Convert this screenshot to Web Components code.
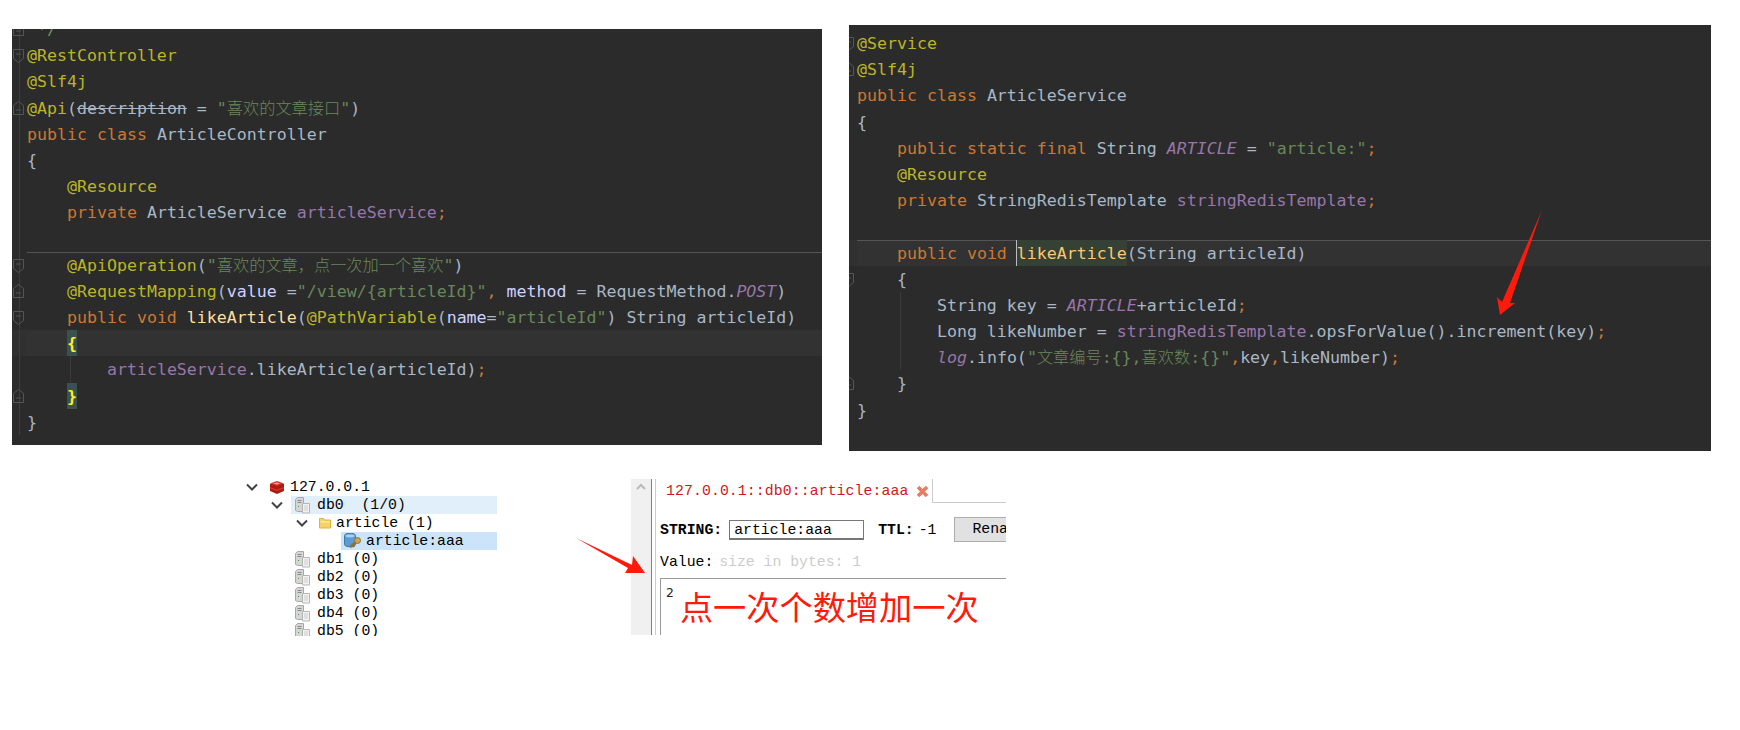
<!DOCTYPE html>
<html>
  <head>
    <meta charset="utf-8">
    <title>Article like counter</title>
    <style>
      html, body { margin: 0; background: #fff; }
      body { width: 1740px; height: 730px; overflow: hidden; padding-top: 25px; box-sizing: border-box; }
      .top { display: flex; align-items: flex-start; }
    </style>
  </head>
  <body>
    <div class="top">
      <code-panel style="--w:810px;--h:416px;--mt:4px;--ml:12px;--pt:0px;--first:-13px;--gut:15px;--rule:#3c3c3c;--fold-x:0px">
        <code-line fold="close"><x-t t="cmt"> */</x-t></code-line>
        <code-line fold="open"><x-t t="an">@RestController</x-t></code-line>
        <code-line><x-t t="an">@Slf4j</x-t></code-line>
        <code-line fold="close"><x-t t="an">@Api</x-t>(<x-t t="del">description</x-t> = <x-t t="str">"<x-t t="zh">喜欢的文章接口</x-t>"</x-t>)</code-line>
        <code-line><x-t t="kw">public class </x-t>ArticleController</code-line>
        <code-line>{</code-line>
        <code-line>    <x-t t="an">@Resource</x-t></code-line>
        <code-line>    <x-t t="kw">private </x-t>ArticleService <x-t t="fld">articleService</x-t><x-t t="kw">;</x-t></code-line>
        <code-line></code-line>
        <code-line divider fold="open">    <x-t t="an">@ApiOperation</x-t>(<x-t t="str">"<x-t t="zh">喜欢的文章，点一次加一个喜欢</x-t>"</x-t>)</code-line>
        <code-line fold="close">    <x-t t="an">@RequestMapping</x-t>(<x-t t="prm">value</x-t> =<x-t t="str">"/view/{articleId}"</x-t><x-t t="kw">, </x-t><x-t t="prm">method</x-t> = RequestMethod.<x-t t="ital">POST</x-t>)</code-line>
        <code-line fold="open">    <x-t t="kw">public void </x-t><x-t t="fn">likeArticle</x-t>(<x-t t="an">@PathVariable</x-t>(<x-t t="prm">name</x-t>=<x-t t="str">"articleId"</x-t>) String articleId)</code-line>
        <code-line current>    <x-t t="brace">{</x-t></code-line>
        <code-line guide="43px">        <x-t t="fld">articleService</x-t>.likeArticle(articleId)<x-t t="kw">;</x-t></code-line>
        <code-line fold="close">    <x-t t="brace">}</x-t></code-line>
        <code-line>}</code-line>
      </code-panel>

      <code-panel style="--w:862px;--h:426px;--mt:0px;--ml:27px;--pt:5px;--first:0px;--gut:8px;--rule:transparent;--fold-x:-7px">
        <code-line fold="open"><x-t t="an">@Service</x-t></code-line>
        <code-line fold="close"><x-t t="an">@Slf4j</x-t></code-line>
        <code-line><x-t t="kw">public class </x-t>ArticleService</code-line>
        <code-line>{</code-line>
        <code-line>    <x-t t="kw">public static final </x-t>String <x-t t="ital">ARTICLE</x-t> = <x-t t="str">"article:"</x-t><x-t t="kw">;</x-t></code-line>
        <code-line>    <x-t t="an">@Resource</x-t></code-line>
        <code-line>    <x-t t="kw">private </x-t>StringRedisTemplate <x-t t="fld">stringRedisTemplate</x-t><x-t t="kw">;</x-t></code-line>
        <code-line></code-line>
        <code-line divider current>    <x-t t="kw">public void </x-t><x-t t="usage">likeArticle</x-t>(String articleId)</code-line>
        <code-line fold="open">    {</code-line>
        <code-line guide="43px">        String key = <x-t t="ital">ARTICLE</x-t>+articleId<x-t t="kw">;</x-t></code-line>
        <code-line guide="43px">        Long likeNumber = <x-t t="fld">stringRedisTemplate</x-t>.opsForValue().increment(key)<x-t t="kw">;</x-t></code-line>
        <code-line guide="43px">        <x-t t="ital">log</x-t>.info(<x-t t="str">"<x-t t="zh">文章编号</x-t>:{},<x-t t="zh">喜欢数</x-t>:{}"</x-t><x-t t="kw">,</x-t>key<x-t t="kw">,</x-t>likeNumber)<x-t t="kw">;</x-t></code-line>
        <code-line fold="close">    }</code-line>
        <code-line>}</code-line>
        <red-arrow style="--x:647px;--y:183px;--aw:50px;--ah:110px" points="46,2 14,95 19,95 4,107 1,89 6,94"></red-arrow>
      </code-panel>
    </div>

    <redis-view>
      <redis-tree>
        <tree-row start="26" open><tree-icon kind="redis" gap="5"></tree-icon>127.0.0.1</tree-row>
        <tree-row start="51" open hl="#e1effb"><tree-icon kind="db"></tree-icon>db0  (1/0)</tree-row>
        <tree-row start="76" open><tree-icon kind="folder"></tree-icon>article (1)</tree-row>
        <tree-row start="101" hl="#cce4fa"><tree-icon kind="key"></tree-icon>article:aaa</tree-row>
        <tree-row start="51"><tree-icon kind="db"></tree-icon>db1 (0)</tree-row>
        <tree-row start="51"><tree-icon kind="db"></tree-icon>db2 (0)</tree-row>
        <tree-row start="51"><tree-icon kind="db"></tree-icon>db3 (0)</tree-row>
        <tree-row start="51"><tree-icon kind="db"></tree-icon>db4 (0)</tree-row>
        <tree-row start="51"><tree-icon kind="db"></tree-icon>db5 (0)</tree-row>
      </redis-tree>
      <key-detail></key-detail>
      <red-arrow style="--x:575px;--y:60px;--aw:74px;--ah:40px" points="1,0 57,27 58,18 70,35 50,35 53,30"></red-arrow>
    </redis-view>

    <script>
      // one syntax-coloured run of text
      class XToken extends HTMLElement {
        constructor() {
          super();
          this.attachShadow({mode: 'open'}).innerHTML = `<style>
            :host { display: inline; }
            :host([t=kw]) { color: #cc7832; }
            :host([t=an]) { color: #bbb529; }
            :host([t=str]) { color: #6a8759; }
            :host([t=cmt]) { color: #629755; }
            :host([t=fld]) { color: #9876aa; }
            :host([t=ital]) { color: #9876aa; font-style: italic; }
            :host([t=prm]) { color: #d0d0ff; }
            :host([t=fn]) { color: #ffdf9f; }
            :host([t=del]) { color: #a9b7c6; text-decoration: line-through; }
            :host([t=zh]) { font-family: "Noto Sans CJK SC", monospace; font-size: 16.2px; font-weight: 300; line-height: 1px; }
            :host([t=brace]) { color: #ffef28; font-weight: bold; background: #3b514d; display: inline-block; height: 26.2px; vertical-align: top; }
            :host([t=usage]) { color: #ffc66d; background: #344134; display: inline-block; height: 26.2px; vertical-align: top; border-left: 1px solid #bbb; margin-left: -1px; }
          </style><slot></slot>`;
        }
      }
      customElements.define("x-t", XToken);

      class CodePanel extends HTMLElement {
        constructor() {
          super();
          this.attachShadow({mode: 'open'}).innerHTML = `<style>
            :host {
              display: block; flex: none; position: relative; overflow: hidden; box-sizing: border-box;
              width: var(--w); height: var(--h);
              margin: var(--mt) 0 0 var(--ml); padding-top: var(--pt);
              background: #2b2b2b; color: #a9b7c6;
              font: 16.6px/28.2px "DejaVu Sans Mono", "Noto Sans CJK SC", monospace;
            }
            .inner { margin-top: var(--first); }
          </style><div class="inner"><slot></slot></div>`;
        }
      }
      customElements.define("code-panel", CodePanel);

      class CodeLine extends HTMLElement {
        static get observedAttributes() { return ["fold"]; }

        constructor() {
          super();
          this.attachShadow({mode: 'open'}).innerHTML = `<style>
            :host { display: flex; height: 26.2px; white-space: pre; }
            .gutter {
              flex: none; width: var(--gut); position: relative;
              background: linear-gradient(var(--rule), var(--rule)) 7px 0 / 1px 100% no-repeat;
            }
            .gutter svg { position: absolute; left: var(--fold-x); top: 6px; }
            .code { flex: 1; min-width: 0; }
            :host([divider]) .code { box-shadow: inset 0 1px 0 #555; }
            :host([current]) .code { background: #323232; }
            :host([current]) .gutter { background-color: #303030; }
            :host([guide]) .code {
              background: linear-gradient(#3b3b3b, #3b3b3b) var(--guide-x, 0) 0 / 1px 100% no-repeat;
            }
          </style><div class="gutter"></div><div class="code"><slot></slot></div>`;
        }

        connectedCallback() {
          if (this.hasAttribute("guide")) this.style.setProperty("--guide-x", this.getAttribute("guide"));
          this._updateRendering();
        }

        attributeChangedCallback() {
          this._updateRendering();
        }

        _updateRendering() {
          var fold = this.getAttribute("fold");
          var box = this.shadowRoot.querySelector(".gutter");
          if (fold == "open") {
            box.innerHTML = '<svg width="13" height="15" fill="none" stroke="#555"><path d="M1.5 1.5h10v9l-5 4-5-4zM4 6h5"/></svg>';
          } else if (fold == "close") {
            box.innerHTML = '<svg width="13" height="15" fill="none" stroke="#555"><path d="M1.5 13.5h10v-9l-5-4-5 4zM4 9h5"/></svg>';
          } else {
            box.innerHTML = "";
          }
        }
      }
      customElements.define("code-line", CodeLine);

      // hand drawn red annotation arrow, sits over the other content
      class RedArrow extends HTMLElement {
        constructor() {
          super();
          this.attachShadow({mode: 'open'}).innerHTML = `<style>
            :host { position: absolute; left: var(--x); top: var(--y); width: var(--aw); height: var(--ah); display: block; }
            svg { display: block; width: 100%; height: 100%; }
          </style><svg fill="#ff1a0c"><polygon points="${this.getAttribute("points")}"/></svg>`;
        }
      }
      customElements.define("red-arrow", RedArrow);

      class RedisView extends HTMLElement {
        constructor() {
          super();
          this.attachShadow({mode: 'open'}).innerHTML = `<style>
            :host {
              display: flex; position: relative; height: 158px; margin-top: 27px; padding-left: 240px;
              overflow: hidden; color: #000;
              font: 14.8px/18px "Liberation Mono", "Noto Sans CJK SC", monospace;
            }
          </style><slot></slot>`;
        }
      }
      customElements.define("redis-view", RedisView);

      class RedisTree extends HTMLElement {
        constructor() {
          super();
          this.attachShadow({mode: 'open'}).innerHTML = `<style>
            :host { display: block; flex: none; width: 257px; }
          </style><slot></slot>`;
        }
      }
      customElements.define("redis-tree", RedisTree);

      class TreeRow extends HTMLElement {
        constructor() {
          super();
          this.attachShadow({mode: 'open'}).innerHTML = `<style>
            :host { display: flex; height: 18px; white-space: pre; }
            .lead { flex: none; display: flex; justify-content: flex-end; align-items: center; }
            .lead svg { margin-right: 8px; }
            .body { flex: 1; display: flex; align-items: center; padding-left: 3px; }
          </style><div class="lead"></div><div class="body"><slot></slot></div>`;
        }

        connectedCallback() {
          var lead = this.shadowRoot.querySelector(".lead");
          lead.style.width = this.getAttribute("start") + "px";
          if (this.hasAttribute("open")) {
            lead.innerHTML = '<svg width="12" height="8" fill="none" stroke="#444" stroke-width="2"><path d="M1 1.5l5 5 5-5"/></svg>';
          }
          if (this.hasAttribute("hl")) {
            this.shadowRoot.querySelector(".body").style.background = this.getAttribute("hl");
          }
        }
      }
      customElements.define("tree-row", TreeRow);

      var TREE_ICONS = {
        redis: [16, 3, '<svg width="16" height="13" viewBox="0 0 16 13"><path fill="#a41e11" d="M1 3v7l7 3 7-3V3z"/><path fill="#dc3024" d="M8 0l7 2.6L8 5 1 2.6z"/><path fill="#dc3024" d="M1 6l7 2.6L15 6v1.6L8 10 1 7.6z"/><path fill="#fff" opacity=".6" d="M4 2.4l4-1 3 1-3 1z"/></svg>'],
        db: [17, 6, '<svg width="17" height="17" viewBox="0 0 17 17"><path fill="#d5d5d5" stroke="#a8a8a8" d="M1.5 2.5l2-2h6v14h-6l-2-1z"/><path stroke="#8a8a8a" d="M3.5 3.5h4M3.5 5.5h4"/><rect x="4" y="9" width="1" height="1" fill="#3a3"/><path fill="#f2f2f2" stroke="#b5b5b5" d="M8.5 6.5h7v9.5h-7z"/><path stroke="#ccc" d="M11 8v6M13 8v6"/></svg>'],
        folder: [12, 5, '<svg width="12" height="12" viewBox="0 0 12 12"><path fill="#f6d365" stroke="#e0b13c" d="M.5 1.5h4l1 1.5h6v8h-11z"/><path fill="#fbe9a8" d="M1.5 4h9v1.5h-9z"/></svg>'],
        key: [17, 5, '<svg width="17" height="16" viewBox="0 0 17 16"><path fill="#5d9bd5" stroke="#3f78ad" d="M.5 2.5c0-3 11-3 11 0v9c0 3-11 3-11 0z"/><ellipse cx="6" cy="3" rx="4.5" ry="1.4" fill="#a9d0f0"/><path stroke="#8a7332" stroke-width="2.4" d="M12 9l-6 5M8.500 12l1.500 2"/><circle cx="13.500" cy="7.500" r="3" fill="#c6a753" stroke="#8a7332"/></svg>']
      };

      class TreeIcon extends HTMLElement {
        constructor() {
          super();
          var d = TREE_ICONS[this.getAttribute("kind")];
          var gap = this.getAttribute("gap") || d[1];
          this.attachShadow({mode: 'open'}).innerHTML = `<style>
            :host { display: flex; flex: none; align-items: center; margin-right: ${gap}px; }
            svg { display: block; }
          </style>${d[2]}`;
        }
      }
      customElements.define("tree-icon", TreeIcon);

      class KeyDetail extends HTMLElement {
        constructor() {
          super();
          this.attachShadow({mode: 'open'}).innerHTML = `<style>
            :host { display: flex; flex: none; width: 375px; margin-left: 134px; height: 156px; margin-top: 1px; overflow: hidden; }
            .bar { flex: none; width: 20px; background: #f0f0f0; border-right: 1px solid #7f7f8f; display: flex; justify-content: center; padding-top: 4px; box-sizing: content-box; height: 152px; }
            .content { flex: none; width: 350px; margin-left: 3px; border-left: 1px solid #ccc; }
            .tabs { display: flex; height: 24px; }
            .tab { flex: none; width: 277px; box-sizing: border-box; padding-left: 10px; display: flex; align-items: center; gap: 8px; color: #d2161b; border-right: 1px solid #ccc; letter-spacing: .1px; }
            .tabfill { flex: 1; border-bottom: 1px solid #ccc; }
            .keyrow { display: flex; align-items: center; height: 25px; margin-top: 14px; padding-left: 4px; white-space: nowrap; }
            b { font-weight: bold; }
            .input { flex: none; width: 135px; height: 20px; box-sizing: border-box; border: 1px solid #777; border-bottom-width: 2px; padding-left: 4px; margin-left: 7px; line-height: 18px; }
            .ttl { margin-left: 14px; }
            .num { margin-left: 5px; }
            .btn { flex: none; width: 70px; height: 25px; box-sizing: border-box; background: #e1e1e1; border: 1px solid #adadad; margin-left: 18px; padding-left: 17px; line-height: 23px; }
            .value { padding-left: 4px; margin-top: 11px; height: 18px; }
            .value span { color: #ccc; margin-left: -3px; }
            .box { margin: 7px 0 0 4px; height: 60px; box-sizing: border-box; border: 1px solid #999; border-right: 0; border-bottom: 0; display: flex; padding-left: 5px; }
            .v { font: 12.4px/15px "DejaVu Sans", sans-serif; color: #222; margin-top: 6px; }
            .note { font: 33.2px/40px "Noto Sans CJK SC", sans-serif; color: #ff1a0c; margin: 7px 0 0 6px; white-space: nowrap; }
          </style>
          <div class="bar"><svg width="10" height="7" fill="none" stroke="#bbb" stroke-width="2"><path d="M1 6l4-4 4 4"/></svg></div>
          <div class="content">
            <div class="tabs">
              <div class="tab"><span>127.0.0.1::db0::article:aaa</span>
                <svg width="13" height="13" stroke="#ea7a63" stroke-width="3.6"><path d="M2 2l9 9M11 2l-9 9"/></svg></div>
              <div class="tabfill"></div>
            </div>
            <div class="keyrow"><b>STRING:</b><div class="input">article:aaa</div>
              <b class="ttl">TTL:</b><span class="num">-1</span><div class="btn">Rename</div></div>
            <div class="value">Value: <span>size in bytes: 1</span></div>
            <div class="box"><div class="v">2</div><div class="note">点一次个数增加一次</div></div>
          </div>`;
        }
      }
      customElements.define("key-detail", KeyDetail);
    </script>
  </body>
</html>
